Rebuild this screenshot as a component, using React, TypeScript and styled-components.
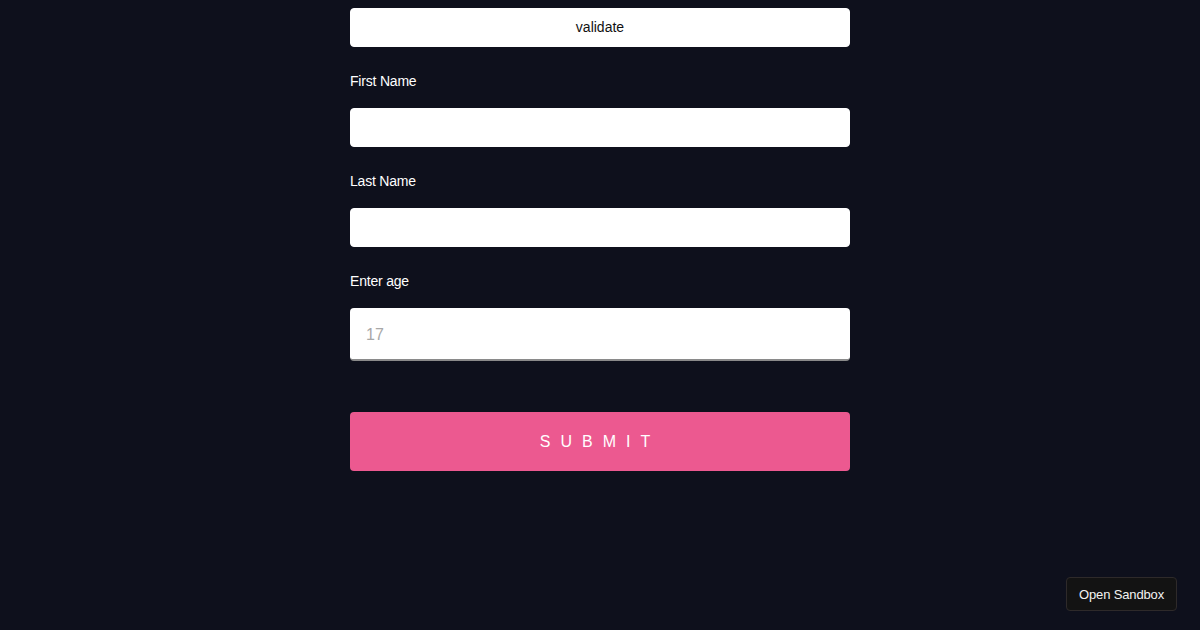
import React from 'react'
import styled, { createGlobalStyle } from 'styled-components'

const GlobalStyle = createGlobalStyle`
  body {
    margin: 8px;
    background: #0e101c;
    font-family: 'Liberation Sans', Arial, sans-serif;
  }
`

const Form = styled.form`
  max-width: 500px;
  margin: 0 auto;
`

const ValidateButton = styled.button`
  display: block;
  box-sizing: border-box;
  width: 100%;
  height: 39px;
  padding: 0 0 2px;
  background: #fff;
  color: #111;
  border: 1px solid #fff;
  border-radius: 4px;
  font-family: 'Liberation Sans', Arial, sans-serif;
  font-size: 14px;
  margin-bottom: 10px;
`

const Label = styled.label`
  display: block;
  line-height: 2;
  margin-top: 20px;
  margin-bottom: 13px;
  color: #fff;
  font-size: 14px;
  font-weight: 200;
  letter-spacing: -0.2px;
`

const Input = styled.input`
  display: block;
  box-sizing: border-box;
  width: 100%;
  height: 39px;
  border-radius: 4px;
  border: 1px solid #fff;
  padding: 10px 15px;
  margin-bottom: 10px;
  font-size: 14px;
  font-family: 'Liberation Sans', Arial, sans-serif;
`

const AgeInput = styled.input`
  display: block;
  box-sizing: border-box;
  width: 100%;
  height: 53px;
  border: none;
  border-bottom: 2px solid #8a8a8a;
  border-radius: 4px;
  background: #fff;
  padding: 2px 16px 0;
  margin-bottom: 10px;
  font-size: 16px;
  font-family: 'Liberation Sans', Arial, sans-serif;
  &::placeholder {
    color: #a8a8a8;
  }
`

const SubmitButton = styled.button`
  display: block;
  box-sizing: border-box;
  width: 100%;
  height: 59px;
  margin-top: 51px;
  background: #ec5990;
  color: #fff;
  border: none;
  border-radius: 4px;
  text-transform: uppercase;
  font-family: 'Liberation Sans', Arial, sans-serif;
  font-size: 16px;
  font-weight: 100;
  letter-spacing: 10px;
`

const SandboxLink = styled.a`
  position: fixed;
  right: 23px;
  bottom: 19px;
  box-sizing: border-box;
  height: 34px;
  padding: 0 12px 0 12px;
  display: flex;
  align-items: center;
  background: #131313;
  border: 1px solid #2e2a2a;
  border-radius: 4px;
  color: #f2f2f2;
  font-family: 'Liberation Sans', Arial, sans-serif;
  font-size: 13px;
  letter-spacing: -0.15px;
  text-decoration: none;
`

const App = () => {
  return (
    <>
      <GlobalStyle />
      <Form onSubmit={(e) => e.preventDefault()}>
        <ValidateButton type="button">validate</ValidateButton>
        <Label>First Name</Label>
        <Input name="firstName" />
        <Label>Last Name</Label>
        <Input name="lastName" />
        <Label>Enter age</Label>
        <AgeInput type="number" placeholder="17" />
        <SubmitButton type="submit">Submit</SubmitButton>
      </Form>
      <SandboxLink href="#">Open Sandbox</SandboxLink>
    </>
  )
}

export default App
